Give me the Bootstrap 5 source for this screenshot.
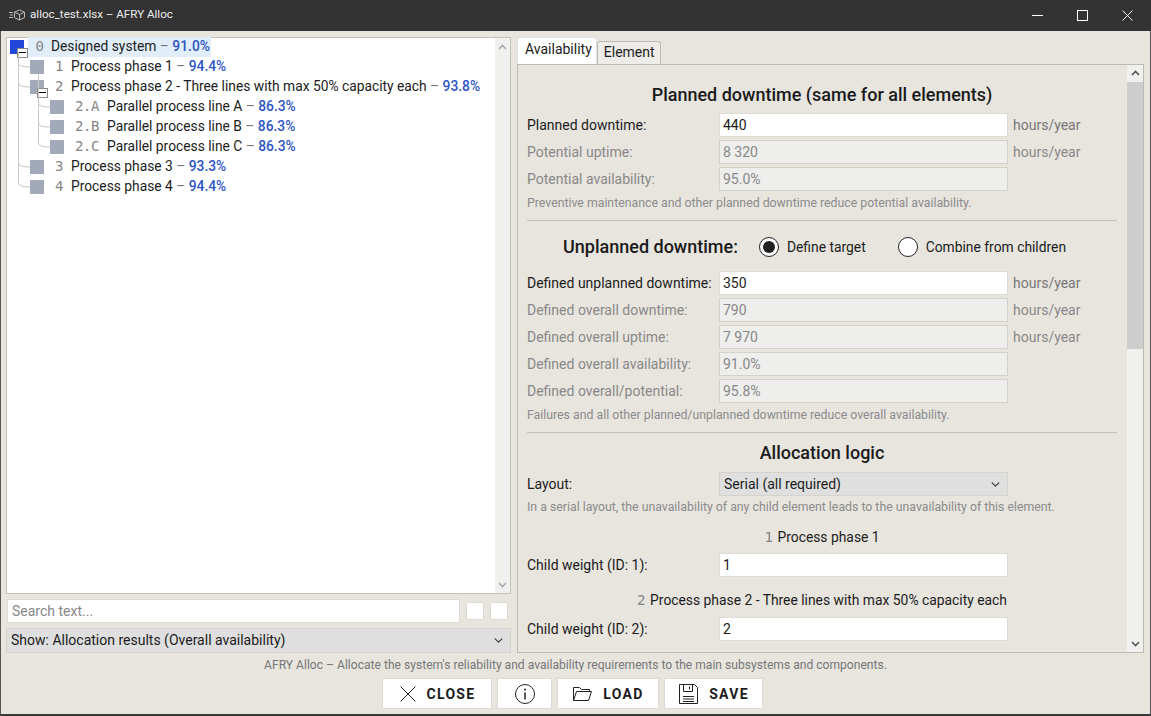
<!DOCTYPE html>
<html lang="en">
<head>
<meta charset="UTF-8">
<title>alloc_test.xlsx – AFRY Alloc</title>
<link href="https://cdn.jsdelivr.net/npm/bootstrap@5.3.0/dist/css/bootstrap.min.css" rel="stylesheet">
<style>
html, body { height: 100%; overflow: hidden; }
body { font-family: Roboto, "Liberation Sans", sans-serif; font-size: 14px; color: #1c1c1c; background: #e8e5df; }
.app-window { width: 1151px; height: 716px; border-bottom: 2px solid #3a3a3a; border-left: 1px solid #555; border-right: 1px solid #555; }
.title-bar { height: 31px; background: #333; color: #eee; font-size: 11.6px; flex: none; margin: 0 -1px; padding: 0 1px 1px 9px; }
.win-btn { width: 45px; height: 30px; color: #fff; }
.work-area { height: 622px; padding: 6px 6px 0 5px; gap: 6px; }
.left-pane { width: 505px; flex: none; }
.tree-box { height: 557px; background: #fff; border: 1px solid #c4c1b8; position: relative; font-size: 13.8px; }
.tree-lines { position: absolute; left: 0; top: 0; }
.tree-row { height: 20px; position: relative; white-space: nowrap; line-height: 16px; }
.lvl-0 { padding-left: 3px; }
.lvl-1 { padding-left: 23px; }
.lvl-2 { padding-left: 43px; }
.node-sq { width: 14px; height: 14px; background: #a2a9b9; flex: none; position: relative; margin-top: 2px; }
.node-sq.active-sq { background: #2146d8; }
.exp-box { position: absolute; left: 7px; top: 8px; width: 11px; height: 10px; background: #fff; border: 1px solid #8b8b8b; }
.exp-box::after { content: ""; position: absolute; left: 1px; right: 1px; top: 3px; height: 1px; background: #000; }
.node-id { font-family: "DejaVu Sans Mono", monospace; font-size: 14px; letter-spacing: -.4px; color: #858585; width: 27px; padding-left: 3px; text-align: center; flex: none; }
.node-id.long-id { width: 43px; padding-left: 11px; text-align: left; }
.node-id.root-id { width: 23px; padding-left: 0; }
.node-txt { padding-right: 1px; }
.sel-bg { background: #e1eef9; height: 20px; margin-top: -1px; padding-top: 1px; margin-left: 4px; }
.node-dash { color: #777; }
.node-val { color: #2e55c4; font-weight: 500; }
.side-scroll { position: absolute; right: 0; top: 0; bottom: 0; width: 15px; background: #f0f0ef; }
.scroll-arrow { position: absolute; left: 3px; width: 9px; height: 6px; }
.search-inp.form-control { width: 453px; flex: none; height: 24px; margin: 5px 6px 5px 1px; padding: 0 4px; border-radius: 0; border: 1px solid #dedbd3; font-size: 14px; }
.search-inp.form-control::placeholder { color: #888; }
.mini-box { width: 18px; height: 18px; background: #fff; border: 1px solid #dedbd3; flex: none; margin-right: 6px; }
.show-sel.form-select, .layout-sel.form-select { border-radius: 0; background-color: #dfdfdf; border: 1px solid #d6d3cc; color: #1c1c1c; font-size: 14px; padding: 0 20px 0 4px; background-position: right 6px center; background-size: 11px 9px; box-shadow: none; }
.show-sel.form-select { height: 25px; }
.layout-sel.form-select { width: 289px; height: 24px; flex: none; }
.right-pane { width: 627px; flex: none; margin-top: -2px; }
.tab-strip.nav-tabs { border: 0; height: 29px; align-items: flex-end; padding-left: 0; }
.tab-strip .nav-link { padding: 0 5px 0 6px; margin: 0; color: #1c1c1c; border: 1px solid #bdbab2; border-bottom: 0; border-radius: 3px 3px 0 0; background: #eeecE8; height: 23px; line-height: 21px; font-size: 14px; }
.tab-strip .nav-link.active { background: #fff; height: 28px; line-height: 22px; padding: 0 4px 0 7px; margin-bottom: -1px; position: relative; color: #1c1c1c; }
.detail-box { height: 589px; border: 1px solid #bdbab2; position: relative; overflow: hidden; padding: 0 26px 0 9px; }
.detail-box .side-scroll { right: 0; width: 16px; }
.scroll-thumb { position: absolute; left: 0; right: 0; top: 17px; height: 267px; background: #cdcdcd; }
.sec-title { font-size: 18px; font-weight: 500; text-align: center; color: #1a1a1a; line-height: 24px; }
.first-title { padding-top: 18px; margin-bottom: 6px; }
.alloc-title { margin-bottom: 7px; }
.field-row { height: 24px; margin-bottom: 3px; }
.field-lbl { width: 192px; flex: none; white-space: nowrap; }
.dim-row .field-lbl, .dim-row .unit-txt { color: #888; }
.field-inp.form-control { width: 289px; height: 24px; flex: none; padding: 0 3px; border-radius: 0; border: 1px solid #dedbd3; font-size: 14px; color: #1c1c1c; background: #fff; }
.dim-row .field-inp.form-control { background: #eeeeec; color: #888; border-color: #d3d1ca; opacity: 1; }
.unit-txt { margin-left: 5px; color: #777; }
.note-txt { font-size: 12.3px; color: #8b8b8b; line-height: 16px; white-space: nowrap; }
.note-low { padding-top: 1px; }
.sep-line { height: 1px; background: #c4c1b8; margin: 9px 0 8px; }
.unpl-row { margin-top: -8px; padding: 2px 0 0 36px; height: 50px; }
.unpl-row .sec-title { margin-right: 21px; }
.radio-dot { width: 20px; height: 20px; border: 1px solid #222; border-radius: 50%; background: #fff; flex: none; position: relative; margin-right: 8px; }
.radio-dot.on::after { content: ""; position: absolute; left: 3px; top: 3px; width: 12px; height: 12px; border-radius: 50%; background: #222; }
.radio-lbl { margin-right: 32px; font-size: 13.85px; }
.child-cap { text-align: center; line-height: 18px; font-size: 13.85px; margin: 13px 0 7px; }
.child-cap.cap-two { margin: 14px 0 8px; }
.child-cap .node-id { width: auto; padding-left: 0; margin-right: 5px; }
.foot-note { font-size: 12.1px; color: #777; text-align: center; line-height: 16px; padding-top: 4px; }
.btn-strip { margin-top: 5px; gap: 5px; padding-right: 6px; }
.act-btn.btn { height: 31px; background: #fff; border: 1px solid #dedbd3; border-radius: 0; font-weight: 700; font-size: 14px; letter-spacing: 1.3px; color: #1c1c1c; padding: 1px 0 0; display: flex; align-items: center; justify-content: center; gap: 10px; }
</style>
</head>
<body>
<div class="app-window d-flex flex-column">
  <div class="title-bar d-flex align-items-center">
    <svg width="17" height="12" viewBox="0 0 17 12" fill="none" stroke="#bbb" stroke-width="1" class="me-1">
      <path d="M10.5 1 15.5 3.2V8.6L10.5 11 5.5 8.6V3.2ZM5.5 3.2 10.5 5.5 15.5 3.2M10.5 5.5V11"/>
      <path d="M0 3.5H4M1 6H4M0 8.500H4"/>
    </svg>
    <span>alloc_test.xlsx – AFRY Alloc</span>
    <div class="ms-auto d-flex">
      <div class="win-btn d-flex align-items-center justify-content-center"><svg width="11" height="11" viewBox="0 0 11 11"><path d="M0 5.500H11" stroke="#fff"/></svg></div>
      <div class="win-btn d-flex align-items-center justify-content-center"><svg width="11" height="11" viewBox="0 0 11 11" fill="none"><rect x=".5" y=".5" width="10" height="10" stroke="#fff"/></svg></div>
      <div class="win-btn d-flex align-items-center justify-content-center"><svg width="11" height="11" viewBox="0 0 11 11"><path d="M.5.500 10.500 10.500M10.500.500 .5 10.500" stroke="#fff"/></svg></div>
    </div>
  </div>

  <div class="work-area d-flex">
    <div class="left-pane">
      <div class="tree-box">
        <div class="tree-row lvl-0 d-flex"><span class="node-sq active-sq"><span class="exp-box"></span></span><span class="sel-bg d-flex"><span class="node-id root-id">0</span><span class="node-txt">Designed system <span class="node-dash">–</span> <span class="node-val">91.0%</span></span></span></div>
        <div class="tree-row lvl-1 d-flex"><span class="node-sq"></span><span class="node-id">1</span><span class="node-txt">Process phase 1 <span class="node-dash">–</span> <span class="node-val">94.4%</span></span></div>
        <div class="tree-row lvl-1 d-flex"><span class="node-sq"><span class="exp-box"></span></span><span class="node-id">2</span><span class="node-txt">Process phase 2 - Three lines with max 50% capacity each <span class="node-dash">–</span> <span class="node-val">93.8%</span></span></div>
        <div class="tree-row lvl-2 d-flex"><span class="node-sq"></span><span class="node-id long-id">2.A</span><span class="node-txt">Parallel process line A <span class="node-dash">–</span> <span class="node-val">86.3%</span></span></div>
        <div class="tree-row lvl-2 d-flex"><span class="node-sq"></span><span class="node-id long-id">2.B</span><span class="node-txt">Parallel process line B <span class="node-dash">–</span> <span class="node-val">86.3%</span></span></div>
        <div class="tree-row lvl-2 d-flex"><span class="node-sq"></span><span class="node-id long-id">2.C</span><span class="node-txt">Parallel process line C <span class="node-dash">–</span> <span class="node-val">86.3%</span></span></div>
        <div class="tree-row lvl-1 d-flex"><span class="node-sq"></span><span class="node-id">3</span><span class="node-txt">Process phase 3 <span class="node-dash">–</span> <span class="node-val">93.3%</span></span></div>
        <div class="tree-row lvl-1 d-flex"><span class="node-sq"></span><span class="node-id">4</span><span class="node-txt">Process phase 4 <span class="node-dash">–</span> <span class="node-val">94.4%</span></span></div>
        <svg class="tree-lines" width="60" height="160" fill="none" stroke="#c8c8c4">
          <path d="M11.500 14V145Q11.500 149 23 149M11.500 25Q11.500 29 23 29M11.500 45Q11.500 49 23 49M11.500 125Q11.500 129 23 129"/>
          <path d="M31.500 36V105Q31.500 109 43 109M31.500 65Q31.500 69 43 69M31.500 85Q31.500 89 43 89"/>
        </svg>
        <div class="side-scroll">
          <svg class="scroll-arrow" style="top:6px" viewBox="0 0 9 6" fill="none" stroke="#aaa" stroke-width="1.600"><path d="M1 5 4.500 1.500 8 5"/></svg>
          <svg class="scroll-arrow" style="bottom:5px" viewBox="0 0 9 6" fill="none" stroke="#aaa" stroke-width="1.600"><path d="M1 1 4.500 4.500 8 1"/></svg>
        </div>
      </div>
      <div class="d-flex align-items-center">
        <input class="search-inp form-control" type="text" placeholder="Search text...">
        <span class="mini-box"></span>
        <span class="mini-box"></span>
      </div>
      <select class="show-sel form-select"><option>Show: Allocation results (Overall availability)</option></select>
    </div>

    <div class="right-pane">
      <ul class="tab-strip nav nav-tabs">
        <li class="nav-item"><a class="nav-link active" href="#">Availability</a></li>
        <li class="nav-item"><a class="nav-link" href="#">Element</a></li>
      </ul>
      <div class="detail-box">
        <div class="sec-title first-title">Planned downtime (same for all elements)</div>
        <div class="field-row d-flex align-items-center"><span class="field-lbl">Planned downtime:</span><input class="field-inp form-control" value="440"><span class="unit-txt">hours/year</span></div>
        <div class="field-row dim-row d-flex align-items-center"><span class="field-lbl">Potential uptime:</span><input class="field-inp form-control" value="8 320" disabled><span class="unit-txt">hours/year</span></div>
        <div class="field-row dim-row d-flex align-items-center"><span class="field-lbl">Potential availability:</span><input class="field-inp form-control" value="95.0%" disabled></div>
        <div class="note-txt note-low">Preventive maintenance and other planned downtime reduce potential availability.</div>
        <div class="sep-line"></div>
        <div class="unpl-row d-flex align-items-center">
          <span class="sec-title">Unplanned downtime:</span>
          <span class="radio-dot on"></span><span class="radio-lbl">Define target</span>
          <span class="radio-dot"></span><span class="radio-lbl">Combine from children</span>
        </div>
        <div class="field-row d-flex align-items-center"><span class="field-lbl">Defined unplanned downtime:</span><input class="field-inp form-control" value="350"><span class="unit-txt">hours/year</span></div>
        <div class="field-row dim-row d-flex align-items-center"><span class="field-lbl">Defined overall downtime:</span><input class="field-inp form-control" value="790" disabled><span class="unit-txt">hours/year</span></div>
        <div class="field-row dim-row d-flex align-items-center"><span class="field-lbl">Defined overall uptime:</span><input class="field-inp form-control" value="7 970" disabled><span class="unit-txt">hours/year</span></div>
        <div class="field-row dim-row d-flex align-items-center"><span class="field-lbl">Defined overall availability:</span><input class="field-inp form-control" value="91.0%" disabled></div>
        <div class="field-row dim-row d-flex align-items-center"><span class="field-lbl">Defined overall/potential:</span><input class="field-inp form-control" value="95.8%" disabled></div>
        <div class="note-txt note-low">Failures and all other planned/unplanned downtime reduce overall availability.</div>
        <div class="sep-line"></div>
        <div class="sec-title alloc-title">Allocation logic</div>
        <div class="field-row d-flex align-items-center"><span class="field-lbl">Layout:</span><select class="layout-sel form-select"><option>Serial (all required)</option></select></div>
        <div class="note-txt">In a serial layout, the unavailability of any child element leads to the unavailability of this element.</div>
        <div class="child-cap"><span class="node-id">1</span>Process phase 1</div>
        <div class="field-row d-flex align-items-center"><span class="field-lbl">Child weight (ID: 1):</span><input class="field-inp form-control" value="1"></div>
        <div class="child-cap cap-two"><span class="node-id">2</span>Process phase 2 - Three lines with max 50% capacity each</div>
        <div class="field-row d-flex align-items-center"><span class="field-lbl">Child weight (ID: 2):</span><input class="field-inp form-control" value="2"></div>
        <div class="side-scroll">
          <div class="scroll-thumb"></div>
          <svg class="scroll-arrow" style="top:5px;left:4px" viewBox="0 0 9 6" fill="none" stroke="#555" stroke-width="1.600"><path d="M1 5 4.500 1.500 8 5"/></svg>
          <svg class="scroll-arrow" style="bottom:5px;left:4px" viewBox="0 0 9 6" fill="none" stroke="#555" stroke-width="1.600"><path d="M1 1 4.500 4.500 8 1"/></svg>
        </div>
      </div>
    </div>
  </div>

  <div class="foot-note">AFRY Alloc – Allocate the system's reliability and availability requirements to the main subsystems and components.</div>
  <div class="btn-strip d-flex justify-content-center">
    <button class="act-btn btn" style="width:110px"><svg width="18" height="18" viewBox="0 0 18 18" fill="none" stroke="#222"><path d="M1.500 1.500 16.500 16.500M16.500 1.500 1.500 16.500"/></svg>CLOSE</button>
    <button class="act-btn btn" style="width:55px"><svg width="22" height="22" viewBox="0 0 22 22" fill="none" stroke="#222"><circle cx="11" cy="11" r="9.500"/><path d="M11 9.500V16.500" stroke-width="1.500"/><circle cx="11" cy="6.500" r="1" fill="#222" stroke="none"/></svg></button>
    <button class="act-btn btn" style="width:102px"><svg width="21" height="16" viewBox="0 0 21 16" fill="none" stroke="#222"><path d="M1.500 14.500V1.500H7.500L9.500 3.500H17.500V5.500M1.500 14.500H16.500L19.500 5.500H4.500Z"/></svg>LOAD</button>
    <button class="act-btn btn" style="width:99px"><svg width="21" height="22" viewBox="0 0 21 22" fill="none" stroke="#222"><path d="M1.500 1.500H16.500L19.500 4.500V20.500H1.500Z"/><path d="M5.500 1.500V8.500H14.500V1.500M11.500 3.500V6.500M5 13.500H16M5 16H16M5 18.500H16"/></svg>SAVE</button>
  </div>
</div>
<script src="https://cdn.jsdelivr.net/npm/bootstrap@5.3.0/dist/js/bootstrap.bundle.min.js"></script>
</body>
</html>
